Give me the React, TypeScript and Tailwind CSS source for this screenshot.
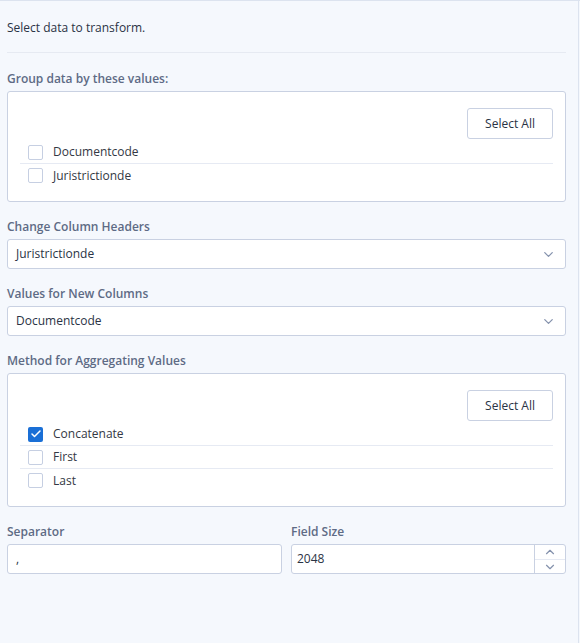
import React from 'react';
import { ChevronDown, ChevronUp, Check } from 'lucide-react';

const font = { fontFamily: '"Open Sans", "Noto Sans", sans-serif' };

const CheckRow: React.FC<{ label: string; checked?: boolean; last?: boolean }> = ({ label, checked, last }) => (
  <div className={`flex items-center h-[23px] pl-2 gap-[10px] ${last ? '' : 'border-b border-[#e6eaf3]'}`}>
    {checked ? (
      <span className="w-[15px] h-[15px] rounded-[2px] bg-[#1a6fd6] flex items-center justify-center">
        <Check size={12} strokeWidth={3} className="text-white" />
      </span>
    ) : (
      <span className="w-[15px] h-[15px] rounded-[2px] border border-[#c6cfe2] bg-white" />
    )}
    <span className="text-[12px] text-[#333844]">{label}</span>
  </div>
);

const CheckBox: React.FC<{ items: { label: string; checked?: boolean }[] }> = ({ items }) => (
  <div className="bg-white border border-[#c9d1e2] rounded-[3px] pt-4 pb-[14px] px-3">
    <div className="flex justify-end">
      <button className="h-[31px] w-[86px] border border-[#c9d1e2] rounded-[3px] text-[12px] text-[#2a3345] bg-white">
        Select All
      </button>
    </div>
    <div className="mt-[2px]">
      {items.map((it, i) => (
        <CheckRow key={it.label} label={it.label} checked={it.checked} last={i === items.length - 1} />
      ))}
    </div>
  </div>
);

const Label: React.FC<{ children: React.ReactNode }> = ({ children }) => (
  <div className="text-[12px] font-semibold text-[#5e6b85] mb-[3px]">{children}</div>
);

const Select: React.FC<{ value: string }> = ({ value }) => (
  <div className="h-[30px] bg-white border border-[#c9d1e2] rounded-[3px] flex items-center justify-between pl-2 pr-[9px]">
    <span className="text-[12px] text-[#2a3345]">{value}</span>
    <ChevronDown size={15} strokeWidth={2} className="text-[#8592ad]" />
  </div>
);

export default function App() {
  return (
    <div style={font} className="w-[580px] h-[643px] bg-[#f5f8fd] border-t border-[#dce3ef]">
      <div className="w-[579px] h-full border-r border-[#dce3ef] pl-[7px] pr-[12px]">
        <div className="h-[52px] flex items-center border-b border-[#e6eaf2] pt-[3px] text-[12px] text-[#2a3345]">
          Select data to transform.
        </div>
        <div className="pt-[17px]">
          <Label>Group data by these values:</Label>
          <CheckBox items={[{ label: 'Documentcode' }, { label: 'Juristrictionde' }]} />
        </div>
        <div className="pt-[16px]">
          <Label>Change Column Headers</Label>
          <Select value="Juristrictionde" />
        </div>
        <div className="pt-[16px]">
          <Label>Values for New Columns</Label>
          <Select value="Documentcode" />
        </div>
        <div className="pt-[16px]">
          <Label>Method for Aggregating Values</Label>
          <CheckBox items={[{ label: 'Concatenate', checked: true }, { label: 'First' }, { label: 'Last' }]} />
        </div>
        <div className="pt-[16px] grid grid-cols-2 gap-[9px]">
          <div>
            <Label>Separator</Label>
            <div className="h-[30px] bg-white border border-[#c9d1e2] rounded-[3px] flex items-center pl-2 text-[12px] text-[#2a3345]">
              ,
            </div>
          </div>
          <div>
            <Label>Field Size</Label>
            <div className="h-[30px] bg-white border border-[#c9d1e2] rounded-[3px] flex items-center">
              <span className="flex-1 pl-[5px] text-[12px] text-[#2a3345]">2048</span>
              <div className="w-[31px] h-full border-l border-[#c9d1e2] flex flex-col">
                <div className="flex-1 flex items-center justify-center border-b border-[#e6eaf3]">
                  <ChevronUp size={14} strokeWidth={2} className="text-[#8592ad]" />
                </div>
                <div className="flex-1 flex items-center justify-center">
                  <ChevronDown size={14} strokeWidth={2} className="text-[#8592ad]" />
                </div>
              </div>
            </div>
          </div>
        </div>
      </div>
    </div>
  );
}
